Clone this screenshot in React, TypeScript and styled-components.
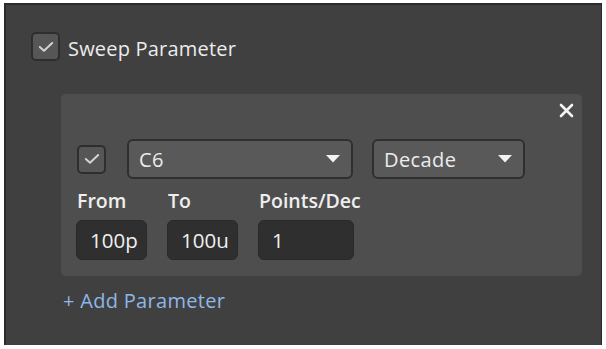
import styled, { createGlobalStyle } from 'styled-components'

const GlobalStyle = createGlobalStyle`
  body {
    margin: 0;
    background: #ffffff;
    font-family: "Open Sans", "Noto Sans", sans-serif;
  }
`

const Frame = styled.div`
  box-sizing: border-box;
  margin: 3px 0 0 4px;
  width: 598px;
  height: 342px;
  background: #404040;
  border-top: 2px solid #2b2b2b;
  border-left: 2px solid #2b2b2b;
  border-right: 1px solid #262626;
  padding: 27px 0 0 25px;
  color: #e6e6e6;
`

const Header = styled.div`
  display: flex;
  align-items: center;
  gap: 8px;
  height: 29px;
`

const Check = styled.span<{ $size: number }>`
  box-sizing: border-box;
  display: flex;
  align-items: center;
  justify-content: center;
  flex: none;
  width: ${({ $size }) => $size}px;
  height: ${({ $size }) => $size}px;
  background: #565656;
  border: 2px solid #2e2e2e;
  border-radius: 5px;
`

const Title = styled.span`
  font-size: 20px;
  padding-top: 3px;
  letter-spacing: 0.2px;
  color: #ececec;
`

const Card = styled.div`
  position: relative;
  box-sizing: border-box;
  margin: 33px 0 0 30px;
  width: 521px;
  height: 182px;
  background: #4e4e4e;
  border-radius: 5px;
  padding: 45px 0 0 16px;
`

const Close = styled.button`
  position: absolute;
  top: 8px;
  right: 8px;
  width: 16px;
  height: 16px;
  padding: 0;
  border: 0;
  background: none;
  display: flex;
  align-items: center;
  justify-content: center;
`

const Row = styled.div`
  display: flex;
  align-items: center;
  height: 40px;
`

const Select = styled.div<{ $width: number; $gap: number }>`
  box-sizing: border-box;
  display: flex;
  align-items: center;
  justify-content: space-between;
  width: ${({ $width }) => $width}px;
  height: 40px;
  margin-left: ${({ $gap }) => $gap}px;
  padding: 0 11px 0 10px;
  background: #595959;
  border: 2px solid #2f2f2f;
  border-radius: 6px;
  font-size: 20px;
  letter-spacing: 0.4px;
  color: #ececec;
`

const Fields = styled.div`
  display: flex;
  gap: 20px;
  margin-top: 9px;
  margin-left: -1px;
`

const Field = styled.div`
  display: flex;
  flex-direction: column;
  gap: 6px;
`

const Label = styled.span`
  font-size: 19.5px;
  font-weight: 600;
  line-height: 26px;
  padding-left: 1px;
  color: #eeeeee;
`

const Input = styled.div<{ $width: number }>`
  box-sizing: border-box;
  display: flex;
  align-items: center;
  width: ${({ $width }) => $width}px;
  height: 40px;
  padding: 0 11px 0 13px;
  background: #2f2f2f;
  border: 1px solid #292929;
  border-radius: 6px;
  font-size: 20.5px;
  color: #f0f0f0;
`

const AddLink = styled.a`
  display: block;
  margin: 12px 0 0 32px;
  font-size: 20px;
  line-height: 26px;
  letter-spacing: 0.3px;
  color: #8db7e6;
  text-decoration: none;
  cursor: pointer;
`

function CheckMark() {
  return (
    <svg width="16" height="12" viewBox="0 0 16 12">
      <path d="M1.8 6 L6 9.8 L14.2 2" fill="none" stroke="#d2d2d2" strokeWidth="2" strokeLinecap="round" strokeLinejoin="round" />
    </svg>
  )
}

function Caret() {
  return (
    <svg width="14" height="8" viewBox="0 0 14 8">
      <path d="M0 0 H14 L7 7.5 Z" fill="#f2f2f2" />
    </svg>
  )
}

export default function App() {
  return (
    <>
      <GlobalStyle />
      <Frame>
        <Header>
          <Check $size={29}>
            <CheckMark />
          </Check>
          <Title>Sweep Parameter</Title>
        </Header>
        <Card>
          <Close aria-label="Remove">
            <svg width="15" height="15" viewBox="0 0 15 15">
              <path d="M2 2 L13 13 M13 2 L2 13" stroke="#f4f4f4" strokeWidth="2.6" strokeLinecap="round" />
            </svg>
          </Close>
          <Row>
            <Check $size={29}>
              <CheckMark />
            </Check>
            <Select $width={226} $gap={21}>
              <span>C6</span>
              <Caret />
            </Select>
            <Select $width={153} $gap={19}>
              <span>Decade</span>
              <Caret />
            </Select>
          </Row>
          <Fields>
            <Field>
              <Label>From</Label>
              <Input $width={71}>100p</Input>
            </Field>
            <Field>
              <Label>To</Label>
              <Input $width={71}>100u</Input>
            </Field>
            <Field>
              <Label>Points/Dec</Label>
              <Input $width={96}>1</Input>
            </Field>
          </Fields>
        </Card>
        <AddLink>+ Add Parameter</AddLink>
      </Frame>
    </>
  )
}
